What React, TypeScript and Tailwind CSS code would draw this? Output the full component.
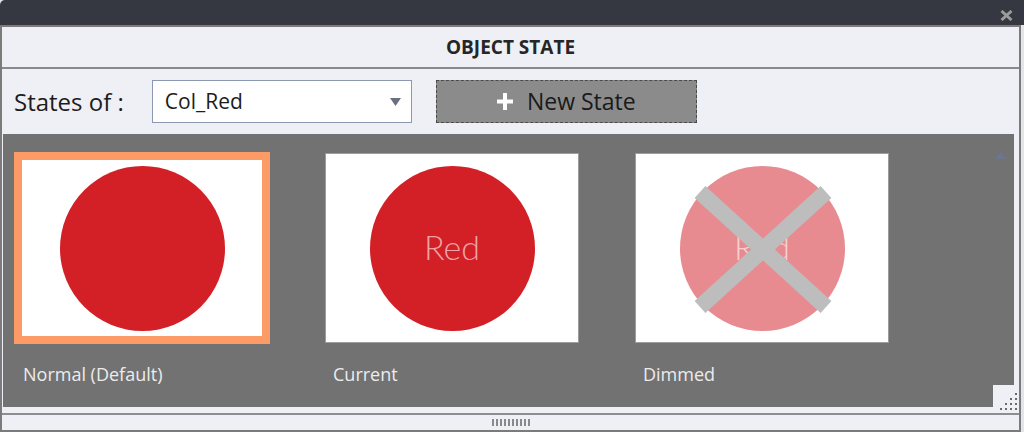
import React from 'react';

type StateItem = {
    label: string;
    selected?: boolean;
    caption?: string;
    dimmed?: boolean;
};

const states: StateItem[] = [
    { label: 'Normal (Default)', selected: true },
    { label: 'Current', caption: 'Red' },
    { label: 'Dimmed', caption: 'Red', dimmed: true },
];

const sans = { fontFamily: '"Open Sans", "Liberation Sans", sans-serif' };

const StateThumb: React.FC<{ item: StateItem }> = ({ item }) => {
    const frame = item.selected
        ? 'border-[8px] border-[#fd9b66]'
        : 'border border-[#9c9c9c] m-[1px]';

    return (
        <div className="w-[256px] flex flex-col">
            <div className="w-[256px] h-[192px] flex">
                <div className={`flex-1 bg-white relative flex items-center justify-center ${frame}`}>
                    <div
                        className={`w-[165px] h-[165px] rounded-full flex items-center justify-center ${item.dimmed ? 'bg-[#e78b90]' : 'bg-[#d31f26]'}`}
                    >
                        {item.caption && (
                            <span
                                className={`text-[34px] leading-none pb-[2px] ${item.dimmed ? 'text-[#f6cfd2]' : 'text-[#eea3a8]'}`}
                                style={{ fontFamily: 'Lato, "Open Sans", sans-serif', fontWeight: 300 }}
                            >
                                {item.caption}
                            </span>
                        )}
                    </div>
                    {item.dimmed && (
                        <svg className="absolute inset-0" width="254" height="190" viewBox="0 0 254 190">
                            <g stroke="#bdbdbd" strokeWidth="16">
                                <line x1="64" y1="38" x2="190" y2="153" />
                                <line x1="190" y1="38" x2="64" y2="153" />
                            </g>
                        </svg>
                    )}
                </div>
            </div>
            <div className="pl-[9px] mt-[18px] text-[18px] leading-[24px] text-[#ececec]" style={sans}>
                {item.label}
            </div>
        </div>
    );
};

const App: React.FC = () => {
    return (
        <div className="w-[1024px] h-[432px] bg-[#e4e5ea] flex flex-col relative overflow-hidden">
            {/* window title bar */}
            <div className="h-[25px] bg-[#353841] rounded-tl-[5px] flex justify-end items-end pr-[11px] pb-[4px]">
                <svg width="13" height="11" viewBox="0 0 13 11">
                    <path d="M1.5 1 L11.5 10 M11.5 1 L1.5 10" stroke="#9b9b9b" strokeWidth="3" />
                </svg>
            </div>

            <div className="flex-1 flex flex-col bg-[#eff0f5] border-t-2 border-l-2 border-r-2 border-b-2 border-[#7b7b7b] mr-[3px]">
                <div className="h-[42px] flex items-center justify-center border-b-2 border-[#8a8a8a]">
                    <span className="text-[19px] font-bold text-[#262626]" style={sans}>
                        OBJECT STATE
                    </span>
                </div>

                <div className="h-[65px] flex items-center pl-[12px]">
                    <span className="text-[24px] text-[#1c1c1c] mr-[28px]" style={sans}>
                        States of :
                    </span>
                    <div className="w-[260px] h-[43px] bg-white border border-[#8c98b2] flex items-center justify-between pl-[12px] pr-[10px]">
                        <span className="text-[21px] text-[#1c1c1c]" style={sans}>Col_Red</span>
                        <svg width="11" height="8" viewBox="0 0 11 8">
                            <path d="M0 0 H11 L5.5 8 Z" fill="#6b7080" />
                        </svg>
                    </div>
                    <button className="ml-[24px] w-[261px] h-[43px] bg-[#8b8b8b] border border-dashed border-[#4a4a4a] flex items-center justify-center gap-[14px]">
                        <svg width="16" height="17" viewBox="0 0 16 17">
                            <path d="M6 0 H10 V6.5 H16 V10.5 H10 V17 H6 V10.5 H0 V6.5 H6 Z" fill="#ffffff" />
                        </svg>
                        <span className="text-[23px] text-[#1a1a1a]" style={sans}>New State</span>
                    </button>
                </div>

                {/* state thumbnails */}
                <div className="h-[273px] bg-[#727272] ml-[1px] mr-[5px] relative flex gap-[54px] pl-[11px] pt-[18px]">
                    {states.map(s => <StateThumb key={s.label} item={s} />)}
                    <svg className="absolute right-[8px] top-[18px]" width="11" height="7" viewBox="0 0 11 7">
                        <path d="M0 7 L5.5 0 L11 7 Z" fill="#6d7590" />
                    </svg>
                    <div className="absolute right-0 bottom-0 w-[21px] h-[22px] bg-[#eff0f5]" />
                </div>

                <div className="h-[6px]" />
                <div className="flex-1 border-t-2 border-[#8e8e8e] flex items-center justify-center">
                    <div className="flex gap-[2px] h-[7px]">
                        {Array.from({ length: 10 }).map((_, i) => (
                            <span key={i} className="w-[2px] h-full bg-[#8a8a8a]" />
                        ))}
                    </div>
                </div>
            </div>

            {/* resize grip dots */}
            <div className="absolute left-[1000px] top-[393px] grid grid-cols-4 gap-[3px]">
                {Array.from({ length: 16 }).map((_, i) => {
                    const row = Math.floor(i / 4);
                    const col = i % 4;
                    const on = col >= 3 - row;
                    return <span key={i} className={`w-[2px] h-[2px] ${on ? 'bg-[#6a6a6a]' : 'bg-transparent'}`} />;
                })}
            </div>
        </div>
    );
};

export default App;
